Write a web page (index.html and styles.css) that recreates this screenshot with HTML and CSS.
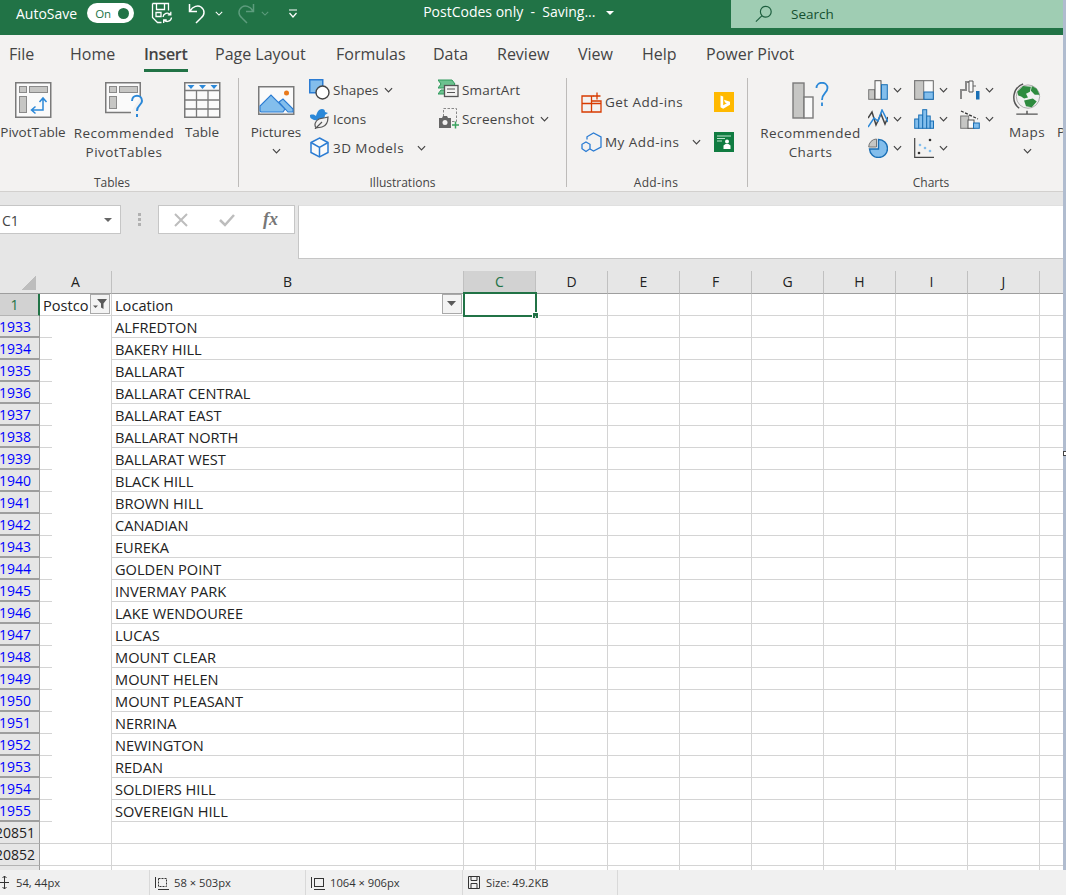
FILE: index.html
```html
<!DOCTYPE html>
<html lang="en">
<head>
<meta charset="utf-8">
<title>PostCodes only</title>
<link rel="stylesheet" href="styles.css">
</head>
<body>
<svg class="sprite" width="0" height="0" aria-hidden="true">
  <symbol id="chev" viewBox="0 0 10 6"><path d="M1 1l4 4 4-4" fill="none" stroke="#444" stroke-width="1.3"/></symbol>
  <symbol id="chevw" viewBox="0 0 10 6"><path d="M1 1l4 4 4-4" fill="none" stroke="#fff" stroke-width="1.3"/></symbol>
</svg>
<div class="app">
  <div class="top">
    <div class="main">
      <header class="title">
        <span class="autosave">AutoSave</span>
        <span class="toggle"><span>On</span><i></i></span>
        <svg class="q-save" width="22" height="22" viewBox="0 0 22 22" fill="none" stroke="#fff" stroke-width="1.3"><path d="M1.5 1.5h16v7M1.5 1.5v14l5 5h4M5.5 1.5v6h8v-6M5 10.5h5v4H5z"/><path d="M12 15a4.300 4.300 0 0 1 7.400-2.500M20.500 15.500a4.300 4.300 0 0 1-7.500 2.500M19.800 9.800v3h-3M12.700 21v-3h3"/></svg>
        <svg class="q-undo" width="20" height="22" viewBox="0 0 20 22" fill="none" stroke="#fff" stroke-width="1.500"><path d="M1.500 2v7.500H9M2 9c3-5 8-6 11-4 4 3 4 8 0 11l-5 5"/></svg>
        <svg class="q-c1" width="8" height="5"><use href="#chevw"/></svg>
        <svg class="q-redo" width="20" height="22" viewBox="0 0 20 22" fill="none" stroke="#5d9c7d" stroke-width="1.500"><path d="M18.500 2v7.500H11M18 9c-3-5-8-6-11-4-4 3-4 8 0 11l5 5"/></svg>
        <svg class="q-c2" width="8" height="5" viewBox="0 0 10 6"><path d="M1 1l4 4 4-4" fill="none" stroke="#5d9c7d" stroke-width="1.300"/></svg>
        <svg class="q-more" width="10" height="9" viewBox="0 0 10 9" fill="none" stroke="#fff" stroke-width="1.200"><path d="M1 1h8M1.500 4l3.500 4 3.500-4"/></svg>
        <span class="doc">PostCodes only&nbsp; -&nbsp; Saving...</span>
        <span class="caret"></span>
        <div class="search">
          <svg width="18" height="20" viewBox="0 0 20 20" fill="none" stroke="#1d5e3e" stroke-width="1.300"><circle cx="12" cy="7.500" r="6"/><path d="M7.800 11.800L1 18.500"/></svg>
          <span>Search</span>
        </div>
      </header>

      <nav class="tabs">
        <span class="tab t-file">File</span>
        <span class="tab t-home">Home</span>
        <span class="tab t-insert active">Insert</span>
        <span class="tab t-page">Page Layout</span>
        <span class="tab t-form">Formulas</span>
        <span class="tab t-data">Data</span>
        <span class="tab t-rev">Review</span>
        <span class="tab t-view">View</span>
        <span class="tab t-help">Help</span>
        <span class="tab t-pp">Power Pivot</span>
      </nav>

      <section class="ribbon">
        <div class="group g-tables">
          <div class="content">
            <div class="big b-pivot">
              <svg width="37" height="36" viewBox="0 0 37 36"><rect x=".75" y=".75" width="35" height="34.500" fill="#fafafa" stroke="#7a7a7a" stroke-width="1.500"/><g fill="#c6c6c4" stroke="#8a8a8a"><rect x="4.500" y="4.500" width="7" height="6"/><rect x="14.500" y="4.500" width="18" height="6"/><rect x="4.500" y="14.500" width="7" height="16"/></g><path d="M28 17v11H17M24.500 20l3.500-4 3.500 4M20.500 24.500L16.500 28l4 3.500" fill="none" stroke="#2b88d8" stroke-width="1.500"/></svg>
              <span>PivotTable</span>
            </div>
            <div class="big b-rec">
              <svg width="39" height="37" viewBox="0 0 39 37"><path d="M26 30.500H.75V.75h34.500v14" fill="#fafafa" stroke="#7a7a7a" stroke-width="1.500"/><g fill="#c6c6c4" stroke="#8a8a8a"><rect x="4.500" y="4.500" width="7" height="6"/><rect x="14.500" y="4.500" width="18" height="6"/><rect x="4.500" y="14.500" width="7" height="12"/></g><path d="M27 19c0-7 10-7 10 0 0 4-5 4-5 10M32 32v3" fill="none" stroke="#2b88d8" stroke-width="2"/></svg>
              <span class="wide">Recommended<br>PivotTables</span>
            </div>
            <div class="big b-table">
              <svg width="37" height="36" viewBox="0 0 37 36"><rect x=".75" y=".75" width="35" height="34.500" fill="#fafafa" stroke="#7a7a7a" stroke-width="1.500"/><path d="M1 8.500h35M1 18h35M1 27h35M12.500 8.500V35M24 8.500V35" stroke="#7a7a7a" stroke-width="1.300" fill="none"/><path d="M3.500 3h7l-3.500 4zM15 3h7l-3.500 4zM26.500 3h7L30 7z" fill="#2b88d8"/></svg>
              <span>Table</span>
            </div>
          </div>
          <div class="label l-tables">Tables</div>
        </div>

        <div class="group g-illus">
          <div class="content">
            <div class="big b-pics">
              <svg class="pic-icon" width="37" height="29" viewBox="0 0 37 29"><rect x=".75" y=".75" width="35" height="27.500" fill="#fafafa" stroke="#7a7a7a" stroke-width="1.500"/><path d="M2 25V20L13 9l14 14-2 3H3zM21 16l4-3 10 10v3H30z" fill="#83beec" stroke="#2b7cd3" stroke-width="1.100"/><circle cx="28.500" cy="7" r="2.500" fill="#e97a1c"/></svg>
              <span>Pictures</span>
              <svg class="chev-b" width="9" height="6"><use href="#chev"/></svg>
            </div>
            <div class="col c-shapes">
              <div class="item">
                <svg width="21" height="21" viewBox="0 0 21 21"><path d="M.75.75h13v8a6 6 0 0 0-5 5h-8z" fill="#83beec" stroke="#2b7cd3" stroke-width="1.500"/><circle cx="13.500" cy="13.500" r="6.500" fill="#fff" stroke="#444" stroke-width="1.400"/></svg>
                <span>Shapes</span><svg class="chev c-sh" width="9" height="6"><use href="#chev"/></svg>
              </div>
              <div class="item">
                <svg width="21" height="21" viewBox="0 0 21 21"><path d="M1 7c3-1 5 0 6 1 1-3 2-7 6-7 2 0 3 1 3 3l3 1-3 2c0 2-1 4-4 4-3 1-6 2-9 0C1 10 1 9 1 7z" fill="#2b88d8"/><path d="M7 20c-2-3-1-7 3-9 3-1 6-1 9-2 0 5-2 9-6 10-2 .5-4 .5-6 1zM6 21l7-7" fill="#f3f2f1" stroke="#555" stroke-width="1.200"/></svg>
                <span>Icons</span>
              </div>
              <div class="item">
                <svg width="21" height="21" viewBox="0 0 21 21" fill="#fafafa" stroke="#2b7cd3" stroke-width="1.500"><path d="M10.500 1L19 5.500v10L10.500 20 2 15.500v-10z"/><path d="M2 5.500l8.500 5 8.500-5M10.500 10.500V20" fill="none"/></svg>
                <span class="wide">3D Models</span><svg class="chev c-3d" width="9" height="6"><use href="#chev"/></svg>
              </div>
            </div>
            <div class="col c-smart">
              <div class="item">
                <svg width="21" height="21" viewBox="0 0 21 21"><path d="M0 1h14l3 4-3 4 -14 0 3-4z" fill="#6cc28f" stroke="#2f9a5c"/><path d="M0 15l3-4h6v4z" fill="#6cc28f" stroke="#2f9a5c"/><rect x="6.500" y="6.500" width="13.500" height="11" fill="#f3f2f1" stroke="#555" stroke-width="1.300"/><path d="M9 10h8M9 13.500h8" stroke="#555"/></svg>
                <span class="slight">SmartArt</span>
              </div>
              <div class="item">
                <svg width="21" height="21" viewBox="0 0 21 21"><rect x="5.500" y=".5" width="13" height="13" fill="none" stroke="#888" stroke-dasharray="2.500 1.500"/><path d="M1 10h3l1-2h4l1 2h3v10H1z" fill="#666"/><circle cx="7" cy="14.500" r="2.500" fill="#f3f2f1"/><path d="M17.500 13.500v7M14 17h7" stroke="#3aa35f" stroke-width="1.500"/></svg>
                <span class="slight">Screenshot</span><svg class="chev c-sh" width="9" height="6"><use href="#chev"/></svg>
              </div>
            </div>
          </div>
          <div class="label">Illustrations</div>
        </div>

        <div class="group g-addins">
          <div class="content">
            <div class="col c-add">
              <div class="item">
                <svg width="21" height="21" viewBox="0 0 21 21" fill="none" stroke="#d83b01" stroke-width="1.300"><path d="M13 4H1v16h19V9H10.500V4M10.500 9v11M1 11.500h19"/><path d="M16 .5v7M12.500 4h7"/></svg>
                <span class="wide">Get Add-ins</span>
              </div>
              <div class="item">
                <svg width="21" height="21" viewBox="0 0 21 21" fill="none" stroke-width="1.300" stroke="#2b7cd3"><path d="M6 7.500V4.800L12.500 1 20 5v10l-7.500 4L9 17"/><path d="M5 10l4 2.300v4.400L5 19.500 1 16.700v-4.400z"/></svg>
                <span class="wide">My Add-ins</span><svg class="chev c-my" width="9" height="6"><use href="#chev"/></svg>
              </div>
            </div>
            <div class="col c-tiles">
              <svg class="tile" width="20" height="20" viewBox="0 0 20 20"><rect width="20" height="20" fill="#ffb900"/><path d="M6.500 3.500l2.700 1v8.800l3.600-2-1.800-.8-1-2.800 6 2.100v3l-6.800 4-2.700-1.500z" fill="#fff"/></svg>
              <svg class="tile" width="20" height="20" viewBox="0 0 20 20"><rect width="20" height="20" fill="#107c41"/><path d="M3 4h14M3 6.500h8M3 9h5" stroke="#bfe3cf"/><circle cx="13" cy="9.500" r="2" fill="#fff"/><path d="M9.500 17v-3.500l2-1.500h3l2 1.500V17z" fill="#fff"/></svg>
            </div>
          </div>
          <div class="label l-add">Add-ins</div>
        </div>

        <div class="group g-charts">
          <div class="content">
            <div class="big b-rch">
              <svg width="38" height="37" viewBox="0 0 38 37"><rect x="1" y="1" width="11" height="35" fill="#c6c6c4" stroke="#7a7a7a" stroke-width="1.400"/><rect x="12" y="15" width="9" height="21" fill="#fafafa" stroke="#7a7a7a" stroke-width="1.400"/><path d="M24.500 6c0-7 11-7 11 0 0 5-5.500 5-5.500 12M30 20.500v3.500" fill="none" stroke="#2b88d8" stroke-width="1.800"/></svg>
              <span class="wide">Recommended<br>Charts</span>
            </div>
            <div class="chart-grid">
              <div class="ci"><svg width="20" height="20" viewBox="0 0 20 20"><rect x=".7" y="9.700" width="6" height="9.600" fill="#c6c6c4" stroke="#777"/><rect x="7" y=".7" width="6" height="18.600" fill="#fafafa" stroke="#555"/><rect x="13.500" y="4.700" width="5.800" height="14.600" fill="#83beec" stroke="#1a6fb5"/></svg><svg class="chev" width="9" height="6"><use href="#chev"/></svg></div>
              <div class="ci"><svg width="20" height="20" viewBox="0 0 20 20"><rect x=".7" y=".7" width="18.600" height="18.600" fill="#fafafa" stroke="#666"/><rect x=".7" y=".7" width="9" height="18.600" fill="#c6c6c4" stroke="#777"/><rect x="10" y="12" width="9.300" height="7.300" fill="#83beec" stroke="#1a6fb5"/></svg><svg class="chev" width="9" height="6"><use href="#chev"/></svg></div>
              <div class="ci"><svg width="20" height="20" viewBox="0 0 20 20"><path d="M1 19v-9h5V2h5" fill="none" stroke="#888" stroke-width="2"/><path d="M9 1h4v11H9z" fill="#fafafa" stroke="#555"/><path d="M13 6h3" stroke="#666"/><rect x="16" y="11" width="3.500" height="8.500" fill="#1a6fb5"/></svg><svg class="chev" width="9" height="6"><use href="#chev"/></svg></div>

              <div class="ci"><svg width="20" height="20" viewBox="0 0 20 20" fill="none" stroke-width="1.500"><path d="M0 9l4-6 4 13 5-11 4 10 3-7" stroke="#444"/><path d="M0 18l6-9 4 3 4-11 6 12" stroke="#2b88d8"/></svg><svg class="chev" width="9" height="6"><use href="#chev"/></svg></div>
              <div class="ci"><svg width="20" height="20" viewBox="0 0 20 20" fill="#83beec" stroke="#1a6fb5"><rect x=".7" y="10" width="4" height="9.300"/><rect x="4.700" y="6" width="4" height="13.300"/><rect x="8.700" y=".7" width="4" height="18.600"/><rect x="12.700" y="7" width="3.500" height="12.300"/><rect x="16.200" y="12" width="3.300" height="7.300"/></svg><svg class="chev" width="9" height="6"><use href="#chev"/></svg></div>
              <div class="ci"><svg width="20" height="20" viewBox="0 0 20 20"><rect x=".7" y="7" width="8" height="12.300" fill="#c6c6c4" stroke="#777"/><rect x="8" y="11" width="6" height="8.300" fill="#fafafa" stroke="#555"/><rect x="13.500" y="14" width="5.800" height="5.300" fill="#83beec" stroke="#1a6fb5"/><path d="M1 2l17 8" stroke="#333" stroke-width="1.300" stroke-dasharray="3 1.500"/></svg><svg class="chev" width="9" height="6"><use href="#chev"/></svg></div>

              <div class="ci"><svg width="20" height="20" viewBox="0 0 20 20"><path d="M10.500 1.500a9 9 0 1 1-9 9.500h9z" fill="#83beec" stroke="#1a6fb5" stroke-width="1.400"/><path d="M8.500 1v8H.7A8 8 0 0 1 8.500 1z" fill="#c6c6c4" stroke="#777"/></svg><svg class="chev" width="9" height="6"><use href="#chev"/></svg></div>
              <div class="ci"><svg width="20" height="20" viewBox="0 0 20 20"><path d="M.7 0v19.300H20" fill="none" stroke="#444" stroke-width="1.200"/><g fill="#83beec"><circle cx="6" cy="7" r="1.300"/><circle cx="11" cy="10" r="1.300"/><circle cx="16" cy="13" r="1.300"/></g><g fill="#333"><circle cx="16" cy="2" r="1.300"/><circle cx="5" cy="15" r="1.300"/></g></svg><svg class="chev" width="9" height="6"><use href="#chev"/></svg></div>
            </div>
            <div class="big b-maps">
              <svg width="32" height="36" viewBox="0 0 32 37"><circle cx="17" cy="15" r="12" fill="#f0f0f0" stroke="#aaa"/><path d="M6 10l6-6 8 1-1 5-4 2 2 4-4 1-3-2-3-1zM21 4l5 3 3 6-5 0-4-4zM13 19l9-2 4 3-5 6-6-1z" fill="#2e8b3f"/><path d="M12 2A14.500 14.500 0 0 0 8 27M5 33h22M16 29.500V33" fill="none" stroke="#555" stroke-width="1.500"/></svg>
              <span class="wide">Maps</span>
              <svg class="chev-b" width="9" height="6"><use href="#chev"/></svg>
            </div>
            <div class="big b-p"><span>P</span></div>
          </div>
          <div class="label l-charts">Charts</div>
        </div>
      </section>

      <section class="formula">
        <div class="namebox"><span>C1</span><i class="arrow"></i></div>
        <div class="dots"><i></i><i></i><i></i></div>
        <div class="fxbox">
          <svg width="18" height="14" viewBox="0 0 18 14"><path d="M3 1l12 12M15 1L3 13" stroke="#bdbdbd" stroke-width="2"/></svg>
          <svg width="18" height="14" viewBox="0 0 18 14"><path d="M2 7l5 5L16 2" fill="none" stroke="#bdbdbd" stroke-width="2.500"/></svg>
          <span class="fx">fx</span>
        </div>
        <div class="fxinput"></div>
      </section>

      <section class="sheet">
        <div class="row head">
          <div class="rh corner"><i></i></div>
          <div class="ch c-a">A</div>
          <div class="ch c-b">B</div>
          <div class="ch cur">C</div>
          <div class="ch">D</div>
          <div class="ch">E</div>
          <div class="ch">F</div>
          <div class="ch">G</div>
          <div class="ch">H</div>
          <div class="ch">I</div>
          <div class="ch">J</div>
          <div class="ch last"></div>
        </div>
        <div class="row first">
          <div class="rh on">1</div>
          <div class="a"><span class="clip">Postco</span><span class="fb"><svg width="14" height="12" viewBox="0 0 14 12"><path d="M4 1h10L10.500 5.500V11L8 9.500v-4z" fill="#5a5a5a"/><path d="M0 7.500h5L2.500 10z" fill="#5a5a5a"/></svg></span></div>
          <div class="b"><span>Location</span><span class="fb"><svg width="10" height="6" viewBox="0 0 10 6"><path d="M0 0h9L4.500 5z" fill="#5a5a5a"/></svg></span></div>
          <div class="rest"><div class="sel"><i></i></div></div>
        </div>
        <div class="row"><div class="rh f">1933</div><div class="a"></div><div class="b">ALFREDTON</div><div class="rest"></div></div>
        <div class="row"><div class="rh f">1934</div><div class="a"></div><div class="b">BAKERY HILL</div><div class="rest"></div></div>
        <div class="row"><div class="rh f">1935</div><div class="a"></div><div class="b">BALLARAT</div><div class="rest"></div></div>
        <div class="row"><div class="rh f">1936</div><div class="a"></div><div class="b">BALLARAT CENTRAL</div><div class="rest"></div></div>
        <div class="row"><div class="rh f">1937</div><div class="a"></div><div class="b">BALLARAT EAST</div><div class="rest"></div></div>
        <div class="row"><div class="rh f">1938</div><div class="a"></div><div class="b">BALLARAT NORTH</div><div class="rest"></div></div>
        <div class="row"><div class="rh f">1939</div><div class="a"></div><div class="b">BALLARAT WEST</div><div class="rest"></div></div>
        <div class="row"><div class="rh f">1940</div><div class="a"></div><div class="b">BLACK HILL</div><div class="rest"></div></div>
        <div class="row"><div class="rh f">1941</div><div class="a"></div><div class="b">BROWN HILL</div><div class="rest"></div></div>
        <div class="row"><div class="rh f">1942</div><div class="a"></div><div class="b">CANADIAN</div><div class="rest"></div></div>
        <div class="row"><div class="rh f">1943</div><div class="a"></div><div class="b">EUREKA</div><div class="rest"></div></div>
        <div class="row"><div class="rh f">1944</div><div class="a"></div><div class="b">GOLDEN POINT</div><div class="rest"></div></div>
        <div class="row"><div class="rh f">1945</div><div class="a"></div><div class="b">INVERMAY PARK</div><div class="rest"></div></div>
        <div class="row"><div class="rh f">1946</div><div class="a"></div><div class="b">LAKE WENDOUREE</div><div class="rest"></div></div>
        <div class="row"><div class="rh f">1947</div><div class="a"></div><div class="b">LUCAS</div><div class="rest"></div></div>
        <div class="row"><div class="rh f">1948</div><div class="a"></div><div class="b">MOUNT CLEAR</div><div class="rest"></div></div>
        <div class="row"><div class="rh f">1949</div><div class="a"></div><div class="b">MOUNT HELEN</div><div class="rest"></div></div>
        <div class="row"><div class="rh f">1950</div><div class="a"></div><div class="b">MOUNT PLEASANT</div><div class="rest"></div></div>
        <div class="row"><div class="rh f">1951</div><div class="a"></div><div class="b">NERRINA</div><div class="rest"></div></div>
        <div class="row"><div class="rh f">1952</div><div class="a"></div><div class="b">NEWINGTON</div><div class="rest"></div></div>
        <div class="row"><div class="rh f">1953</div><div class="a"></div><div class="b">REDAN</div><div class="rest"></div></div>
        <div class="row"><div class="rh f">1954</div><div class="a"></div><div class="b">SOLDIERS HILL</div><div class="rest"></div></div>
        <div class="row"><div class="rh f">1955</div><div class="a"></div><div class="b">SOVEREIGN HILL</div><div class="rest"></div></div>
        <div class="row plain"><div class="rh">20851</div><div class="a"></div><div class="b"></div><div class="rest"></div></div>
        <div class="row plain"><div class="rh">20852</div><div class="a"></div><div class="b"></div><div class="rest"></div></div>
        <div class="row plain"><div class="rh"></div><div class="a"></div><div class="b"></div><div class="rest"></div></div>
      </section>
    </div>
    <aside class="edge"><i></i></aside>
  </div>

  <footer class="status">
    <div class="st s1"><svg width="9" height="13" viewBox="0 0 9 13" fill="none" stroke="#333"><path d="M4.500 0v13M0 6.500h9M2.500 2l2-2 2 2M2.500 11l2 2 2-2"/></svg><span>54, 44px</span></div>
    <div class="st s2"><svg width="14" height="14" viewBox="0 0 14 14" fill="none" stroke="#333"><rect x="3.500" y="2.500" width="8" height="8" stroke-dasharray="2 1"/><path d="M.5 1v11M3 13.500h11"/></svg><span>58 × 503px</span></div>
    <div class="st s3"><svg width="14" height="14" viewBox="0 0 14 14" fill="none" stroke="#333"><rect x="3.500" y="2.500" width="9" height="8"/><path d="M.5 1v11M3 13.500h11"/></svg><span>1064 × 906px</span></div>
    <div class="st s4"><svg width="12" height="13" viewBox="0 0 12 13" fill="none" stroke="#333"><path d="M.5.500h11v12H.5zM3 .5v4h6v-4M3 12.500v-5h6v5"/></svg><span>Size: 49.2KB</span></div>
  </footer>
</div>
</body>
</html>
```

FILE: styles.css
```css
* { box-sizing: border-box; }
html, body { margin: 0; padding: 0; }
body { font-family: "Open Sans", "Noto Sans", sans-serif; color: #444; background: #fff; }
svg { display: block; flex: none; }
.sprite { position: absolute; }

.app { width: 1066px; height: 895px; display: flex; flex-direction: column; overflow: hidden; }
.top { display: flex; height: 870px; }
.main { width: 1063px; display: flex; flex-direction: column; overflow: hidden; }
.edge { width: 3px; background: #b0bccf; position: relative; }
.edge i { position: absolute; left: 0; top: 451px; width: 4px; height: 5px; background: #fff; border: 1px solid #444; }

/* title bar */
.title { height: 35px; flex: none; background: #217346; color: #fff; display: flex; align-items: center; font-size: 14px; padding-bottom: 9px; padding-left: 16px; }
.toggle { margin-left: 10px; width: 47px; height: 20px; background: #fff; border-radius: 10px; color: #217346; font-size: 11.5px; display: flex; align-items: center; padding: 0 5px 0 8px; justify-content: space-between; }
.toggle i { width: 11px; height: 11px; border-radius: 50%; background: #217346; }
.q-save { margin-left: 17px; }
.q-undo { margin-left: 15px; }
.q-c1 { margin-left: 7px; }
.q-redo { margin-left: 12px; }
.q-c2 { margin-left: 6px; }
.q-more { margin-left: 19px; }
.doc { margin: -3px 0 0 125px; font-size: 14px; white-space: nowrap; width: 181px; }
.caret { width: 0; height: 0; border: 4px solid transparent; border-top: 4px solid #fff; border-bottom: 0; margin-left: 2px; }
.search { margin-left: auto; width: 332px; height: 28px; align-self: flex-start; background: #9fcdb3; color: #14502f; display: flex; align-items: center; padding-left: 24px; gap: 18px; font-size: 13.5px; }

/* tabs */
.tabs { height: 37px; flex: none; background: #f3f2f1; display: flex; font-size: 16px; color: #444; }
.tab { display: block; padding-top: 8px; height: 37px; white-space: nowrap; }
.t-file { margin-left: 9px; width: 61px; }
.t-home { width: 74px; }
.t-insert { width: 71px; }
.t-page { width: 121px; }
.t-form { width: 97px; }
.t-data { width: 64px; }
.t-rev { width: 81px; }
.t-view { width: 64px; }
.t-help { width: 64px; }
.active { font-weight: 600; position: relative; letter-spacing: -.3px; }
.active::after { content: ""; position: absolute; left: 0; top: 34px; width: 44px; height: 3px; background: #217346; }

/* ribbon */
.ribbon { height: 120px; flex: none; background: #f3f2f1; border-bottom: 1px solid #d2d0ce; display: flex; font-size: 13.5px; overflow: hidden; }
.group { height: 109px; margin-top: 6px; border-right: 1px solid #bdbbb9; display: flex; flex-direction: column; flex: none; }
.g-tables { width: 239px; }
.g-illus { width: 328px; }
.g-addins { width: 181px; }
.g-charts { width: 315px; border-right: 0; }
.content { height: 91px; flex: none; display: flex; }
.label { height: 18px; flex: none; margin-top: 5px; text-align: center; font-size: 12px; line-height: 18px; }
.l-tables { padding-right: 14px; }
.l-add { padding-right: 2px; letter-spacing: .3px; }
.big { display: flex; flex-direction: column; align-items: center; flex: none; padding-top: 4px; line-height: 19px; text-align: center; white-space: nowrap; }
.big span { margin-top: 5px; }
.wide { letter-spacing: .45px; }
.slight { letter-spacing: .2px; }
.chev-b { margin-top: 6px; }
.b-pivot { width: 66px; }
.b-pivot svg { margin-left: 1px; }
.b-rec { width: 116px; padding-left: 0; }
.b-table { width: 40px; }
.g-illus .content { padding-left: 4px; }
.b-pics { width: 66px; padding-top: 8px; }
.b-pics span { margin-top: 8px; }
.col { display: flex; flex-direction: column; margin-top: -3px; }
.item { height: 29px; display: flex; align-items: center; gap: 3px; white-space: nowrap; }
.chev { margin-left: 5px; }
.c-sh { margin-left: 3px; }
.c-3d { margin-left: 10px; }
.c-my { margin-left: 10px; }
.c-shapes { width: 129px; }
.c-add { width: 133px; margin: 4px 0 0 14px; }
.c-add .item { height: 40px; }
.c-tiles { margin-top: 14px; gap: 20px; }
.g-charts .content { padding-left: 6px; }
.b-rch { width: 113px; }
.chart-grid { width: 138px; margin-left: 1px; display: grid; grid-template-columns: repeat(3, 46px); grid-auto-rows: 29px; margin-top: -3px; }
.ci { display: flex; align-items: center; }
.b-maps { width: 42px; }
.b-p { margin-left: 9px; text-align: left; padding-top: 45px; align-items: flex-start; }
.b-p span { margin: 0; }
.l-charts { width: 366px; }

/* formula row */
.formula { height: 79px; flex: none; background: #e6e6e6; display: flex; align-items: flex-start; padding-top: 13px; border-bottom: 0; }
.namebox { width: 121px; height: 29px; background: #fff; border: 1px solid #c6c6c6; border-left: 0; display: flex; align-items: center; justify-content: space-between; padding: 1px 8px 0 2px; font-size: 14px; color: #444; }
.arrow { width: 0; height: 0; border: 4px solid transparent; border-top: 4px solid #666; border-bottom: 0; }
.dots { width: 37px; height: 29px; display: flex; flex-direction: column; align-items: center; justify-content: center; gap: 2px; }
.dots i { width: 3px; height: 3px; background: #b1b1b1; }
.fxbox { width: 137px; height: 29px; background: #fff; border: 1px solid #c6c6c6; display: flex; align-items: center; padding: 0 16px 0 13px; justify-content: space-between; }
.fx { font-family: "Liberation Serif", serif; font-style: italic; font-weight: 700; font-size: 18px; color: #777; }
.fxinput { margin-left: 3px; flex: 1; height: 54px; background: #fff; border: 1px solid #c6c6c6; border-right: 0; border-top-color: #e0e0e0; }

/* sheet */
.sheet { flex: 1; overflow: hidden; background: #fff; font-size: 14.6px; color: #222; }
.row { display: flex; height: 22px; line-height: 22px; }
.rh { width: 40px; flex: none; display: flex; justify-content: center; padding-right: 9px; background: #e6e6e6; border-right: 1px solid #9e9e9e; border-bottom: 1px solid #b4b4b4; white-space: nowrap; font-size: 14px; }
.f { color: #0000ff; border-bottom: 2px solid #9e9e9e; }
.rh.on { background: #d2d2d2; color: #217346; border-right: 2px solid #217346; }
.a { width: 72px; flex: none; border-right: 1px solid #d4d4d4; background: linear-gradient(#d4d4d4, #d4d4d4) left bottom / 12px 1px no-repeat; padding-left: 3px; display: flex; }
.plain .a, .first .a { background: none; border-bottom: 1px solid #d4d4d4; }
.b { width: 352px; flex: none; border-right: 1px solid #d4d4d4; border-bottom: 1px solid #d4d4d4; padding-left: 3px; display: flex; justify-content: space-between; white-space: nowrap; }
.rest { flex: 1; position: relative; border-bottom: 1px solid #d4d4d4; background: repeating-linear-gradient(to right, transparent 0 71px, #d4d4d4 71px 72px); }
.clip { overflow: hidden; flex: 1; white-space: nowrap; }
.fb { width: 20px; height: 20px; flex: none; margin: 0 1px 0 0; background: #f3f3f3; border: 1px solid #a9a9a9; display: flex; align-items: center; justify-content: center; }

.head { height: 23px; background: #e6e6e6; border-bottom: 0; line-height: 22px; }
.head .rh { border: 0; border-bottom: 1px solid #9e9e9e; position: relative; padding: 0; }
.corner { background: #e6e6e6; }
.corner i { position: absolute; left: 21px; top: 5px; width: 15px; height: 14px; background: linear-gradient(to bottom right, transparent 50%, #bdbdbd 50%); }
.ch { width: 72px; flex: none; text-align: center; border-right: 1px solid #c0c0c0; border-bottom: 1px solid #9e9e9e; color: #222; font-size: 14px; }
.c-b { width: 352px; }
.cur { background: #d2d2d2; color: #217346; }
.last { flex: 1; border-right: 0; }

.sel { position: absolute; left: -1px; top: -2px; width: 74px; height: 25px; border: 2px solid #217346; }
.sel i { position: absolute; right: -4px; bottom: -4px; background: #217346; border: 1px solid #fff; box-sizing: content-box; width: 5px; height: 5px; }

/* status */
.status { height: 25px; flex: none; background: #f0f0f0; display: flex; font-size: 11.2px; color: #333; }
.st { height: 25px; border-right: 1px solid #d9d9d9; display: flex; align-items: center; gap: 5px; padding-left: 5px; white-space: nowrap; }
.s1 { width: 150px; padding-left: 0; gap: 7px; }
.s2 { width: 156px; }
.s3 { width: 157px; }
.s4 { width: 155px; gap: 6px; }
```
